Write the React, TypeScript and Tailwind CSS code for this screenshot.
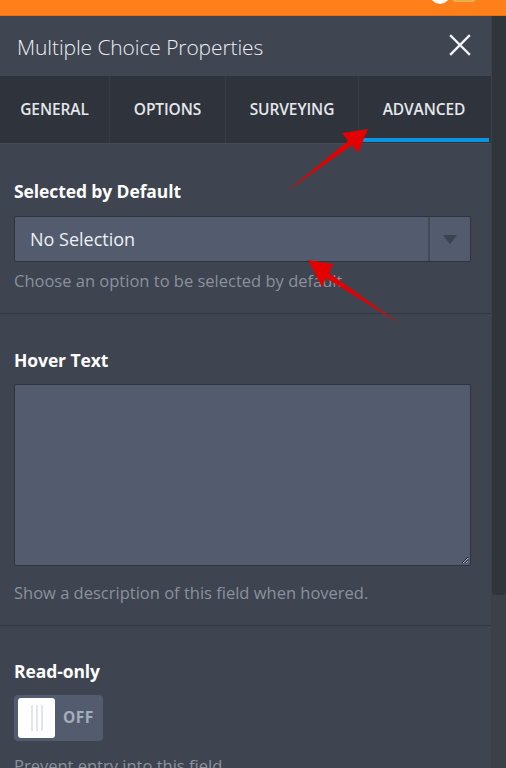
import React from "react";

const font = { fontFamily: '"Open Sans", "Noto Sans", sans-serif' };

function Section({ label, children, help, pt = "pt-[33px]" }: { label: string; children: React.ReactNode; help: string; pt?: string }) {
  return (
    <div className={`${pt} pb-[20px] pl-[14px] pr-[20px] border-b border-[#333840]`}>
      <div className="text-[17.5px] leading-[24px] font-bold text-white tracking-[-0.1px]">{label}</div>
      {children}
      <div className="text-[16.5px] leading-[24px] text-[#8b929d]">{help}</div>
    </div>
  );
}

export default function App() {
  const tabs = [
    { t: "GENERAL", w: "w-[110px]" },
    { t: "OPTIONS", w: "w-[116px]" },
    { t: "SURVEYING", w: "w-[133px]" },
    { t: "ADVANCED", w: "w-[130px]" },
  ];
  return (
    <div className="relative w-[506px] h-[768px] overflow-hidden bg-[#3e4450]" style={font}>
      <div className="relative h-[16px] bg-[#ff7f1a] border-b border-[#e86f10]">
        <div className="absolute left-[430px] top-[-16px] w-[20px] h-[20px] rounded-full bg-white" />
        <div className="absolute left-[452px] top-[-6px] w-[24px] h-[8px] rounded-full bg-[#e8b04a]" />
      </div>
      <div className="flex h-[752px]">
        <div className="w-[491px] flex flex-col">
          <div className="h-[60px] shrink-0 bg-[#3f4551] flex items-center justify-between pl-[17px] pr-[20px]">
            <div className="text-[21px] font-light text-[#eceef1] leading-none tracking-[-0.1px] mt-[3px]">Multiple Choice Properties</div>
            <svg width="22" height="22" viewBox="0 0 22 22" className="mt-[-2px]">
              <path d="M2 2 L20 20 M20 2 L2 20" stroke="#f2f3f5" strokeWidth="2.4" strokeLinecap="square" />
            </svg>
          </div>
          <div className="h-[68px] shrink-0 bg-[#2f333b] flex border-b border-[#454b56]">
            {tabs.map((tab, i) => (
              <div key={tab.t} className={`${tab.w} relative flex items-center justify-center ${i < 3 ? "border-r border-[#363b44]" : ""}`}>
                <span className="text-[15.5px] font-semibold text-[#e4e7eb] tracking-[-0.1px] mt-[1px]">{tab.t}</span>
                {i === 3 && <div className="absolute left-[3px] right-0 bottom-[1px] h-[4px] bg-[#0a94e1]" />}
              </div>
            ))}
          </div>
          <Section label="Selected by Default" help="Choose an option to be selected by default" pt="pt-[35px]">
            <div className="mt-[13px] mb-[7px] h-[46px] flex bg-[#525c6e] border border-[#2f343c] rounded-[2px]">
              <div className="flex-1 flex items-center pl-[15px] text-[18px] text-[#eef0f3]">No Selection</div>
              <div className="w-[2px] bg-[#434a57]" />
              <div className="w-[40px] flex items-center justify-center">
                <svg width="14" height="9" viewBox="0 0 14 9"><path d="M0 0 H14 L7 9 Z" fill="#3c4350" /></svg>
              </div>
            </div>
          </Section>
          <Section label="Hover Text" help="Show a description of this field when hovered." pt="pt-[34px]">
            <div className="relative mt-[12px] mb-[15px] h-[182px] bg-[#525c6e] border border-[#2f343c] rounded-[2px]">
              <svg width="10" height="10" viewBox="0 0 10 10" className="absolute right-[1px] bottom-[1px]">
                <path d="M9 3 L3 9 M9 6 L6 9" stroke="#1f2228" strokeWidth="1" />
                <path d="M9 4 L4 9 M9 7 L7 9" stroke="#c8ccd2" strokeWidth="0.8" />
              </svg>
            </div>
          </Section>
          <div className="pt-[33px] pl-[14px] pr-[20px]">
            <div className="text-[17.5px] leading-[24px] font-bold text-white tracking-[-0.1px]">Read-only</div>
            <div className="mt-[12px] w-[89px] h-[46px] rounded-[4px] bg-[#525c6e] flex items-center pl-[4px]">
              <div className="w-[37px] h-[40px] rounded-[3px] bg-white flex items-center justify-center gap-[3px]">
                <div className="w-[2px] h-[26px] bg-[#e3e5e8]" />
                <div className="w-[2px] h-[26px] bg-[#e3e5e8]" />
                <div className="w-[2px] h-[26px] bg-[#e3e5e8]" />
              </div>
              <span className="ml-[8px] text-[15.5px] font-bold text-[#a6aeba] tracking-[0.5px]">OFF</span>
            </div>
            <div className="mt-[13px] text-[16.5px] leading-[24px] text-[#8b929d]">Prevent entry into this field.</div>
          </div>
        </div>
        <div className="w-[15px] bg-[#3b4049] flex flex-col">
          <div className="h-[579px] ml-[1px] rounded-b-[4px] bg-[#30343b]" />
        </div>
      </div>
      <svg className="absolute left-0 top-0 pointer-events-none" width="506" height="768" viewBox="0 0 506 768">
        <polygon points="286,192 348,141 342,133 368,129 358,153 352,145" fill="#e50000" />
        <polygon points="400,324 329,273 333,264 308,260 322,287 326,278" fill="#e50000" />
      </svg>
    </div>
  );
}
